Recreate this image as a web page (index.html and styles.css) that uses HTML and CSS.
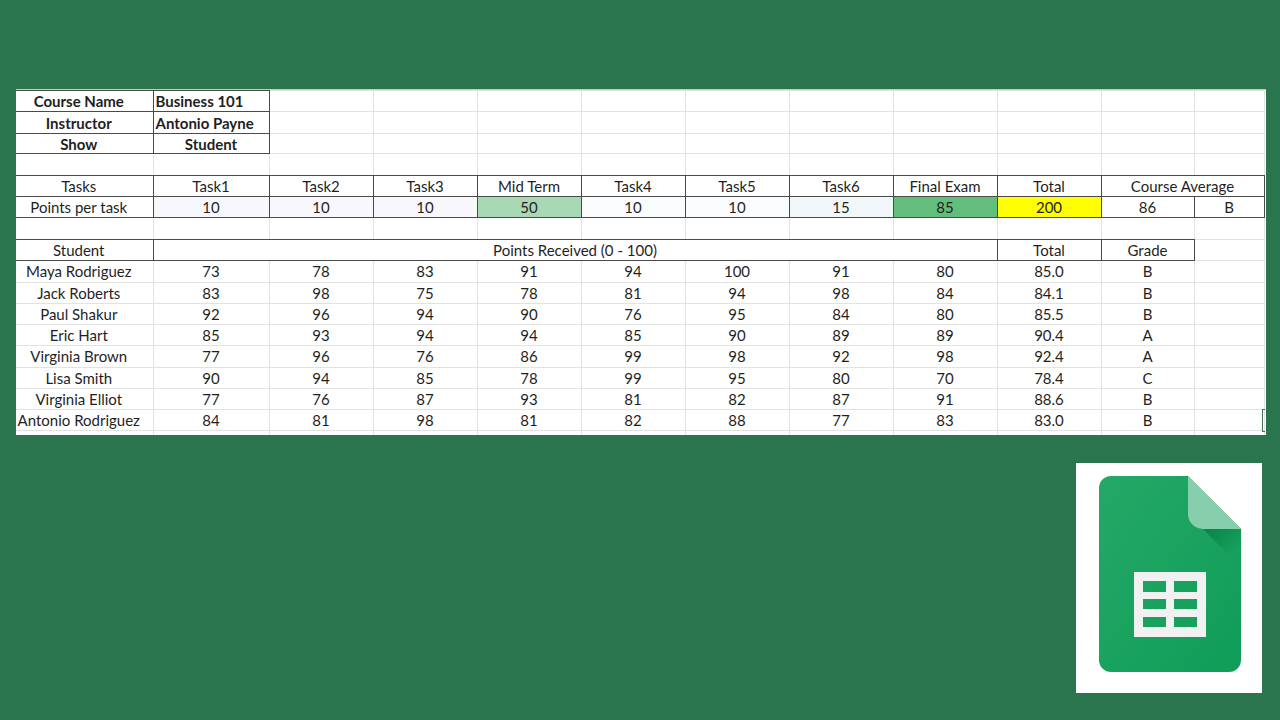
FILE: index.html
```html
<!DOCTYPE html>
<html lang="en">
<head>
<meta charset="utf-8">
<title>Gradebook</title>
<link rel="stylesheet" href="styles.css">
</head>
<body>
<main class="page">
<section class="sheet">
<table class="grid">
<colgroup><col class="c-name"><col class="c-first"><col class="c"><col class="c"><col class="c"><col class="c"><col class="c"><col class="c"><col class="c"><col class="c"><col class="c-grade"><col class="c-end"></colgroup>
<tbody>
<tr><th class="dark">Course Name</th><th class="dark left">Business 101</th><td></td><td></td><td></td><td></td><td></td><td></td><td></td><td></td><td></td><td></td></tr>
<tr class="tall"><th class="dark">Instructor</th><th class="dark left">Antonio Payne</th><td></td><td></td><td></td><td></td><td></td><td></td><td></td><td></td><td></td><td></td></tr>
<tr class="short"><th class="dark">Show</th><th class="dark">Student</th><td></td><td></td><td></td><td></td><td></td><td></td><td></td><td></td><td></td><td></td></tr>
<tr class="tall gap gap-full"><td></td><td></td><td></td><td></td><td></td><td></td><td></td><td></td><td></td><td></td><td></td><td></td></tr>
<tr><td class="dark">Tasks</td><td class="dark">Task1</td><td class="dark">Task2</td><td class="dark">Task3</td><td class="dark">Mid Term</td><td class="dark">Task4</td><td class="dark">Task5</td><td class="dark">Task6</td><td class="dark">Final Exam</td><td class="dark">Total</td><td class="dark" colspan="2">Course Average</td></tr>
<tr><td class="dark">Points per task</td><td class="dark p10">10</td><td class="dark p10">10</td><td class="dark p10">10</td><td class="dark p50">50</td><td class="dark p10b">10</td><td class="dark p10b">10</td><td class="dark p15">15</td><td class="dark p85">85</td><td class="dark p200">200</td><td class="dark">86</td><td class="dark">B</td></tr>
<tr class="tall gap"><td></td><td></td><td></td><td></td><td></td><td></td><td></td><td></td><td></td><td></td><td></td><td></td></tr>
<tr><td class="dark">Student</td><td class="dark" colspan="8">Points Received (0 - 100)</td><td class="dark">Total</td><td class="dark">Grade</td><td></td></tr>
<tr class="tall"><td>Maya Rodriguez</td><td>73</td><td>78</td><td>83</td><td>91</td><td>94</td><td>100</td><td>91</td><td>80</td><td>85.0</td><td>B</td><td></td></tr>
<tr><td>Jack Roberts</td><td>83</td><td>98</td><td>75</td><td>78</td><td>81</td><td>94</td><td>98</td><td>84</td><td>84.1</td><td>B</td><td></td></tr>
<tr><td>Paul Shakur</td><td>92</td><td>96</td><td>94</td><td>90</td><td>76</td><td>95</td><td>84</td><td>80</td><td>85.5</td><td>B</td><td></td></tr>
<tr><td>Eric Hart</td><td>85</td><td>93</td><td>94</td><td>94</td><td>85</td><td>90</td><td>89</td><td>89</td><td>90.4</td><td>A</td><td></td></tr>
<tr class="tall"><td>Virginia Brown</td><td>77</td><td>96</td><td>76</td><td>86</td><td>99</td><td>98</td><td>92</td><td>98</td><td>92.4</td><td>A</td><td></td></tr>
<tr><td>Lisa Smith</td><td>90</td><td>94</td><td>85</td><td>78</td><td>99</td><td>95</td><td>80</td><td>70</td><td>78.4</td><td>C</td><td></td></tr>
<tr><td>Virginia Elliot</td><td>77</td><td>76</td><td>87</td><td>93</td><td>81</td><td>82</td><td>87</td><td>91</td><td>88.6</td><td>B</td><td></td></tr>
<tr><td>Antonio Rodriguez</td><td>84</td><td>81</td><td>98</td><td>81</td><td>82</td><td>88</td><td>77</td><td>83</td><td>83.0</td><td>B</td><td class="selected"><span class="cursor"></span></td></tr>
<tr class="stub"><td></td><td></td><td></td><td></td><td></td><td></td><td></td><td></td><td></td><td></td><td></td><td></td></tr>
</tbody>
</table>
</section>
<aside class="logo-card">
<svg class="logo" viewBox="0 0 186 230" width="186" height="230" aria-label="Google Sheets logo">
<defs>
<linearGradient id="doc" x1="0" y1="0" x2="1" y2="1"><stop offset="0" stop-color="#25a867"/><stop offset="1" stop-color="#0f9d58"/></linearGradient>
<linearGradient id="shade" x1="0" y1="0" x2="0.7" y2="0.7"><stop offset="0" stop-color="#0c8049"/><stop offset="1" stop-color="#15a05d"/></linearGradient>
</defs>
<path d="M35 13H112L165 66V197a12 12 0 0 1-12 12H35a12 12 0 0 1-12-12V25a12 12 0 0 1 12-12Z" fill="url(#doc)"/>
<path d="M127 66L165 104V66Z" fill="url(#shade)"/>
<path d="M112 13L165 66H127a15 15 0 0 1-15-15Z" fill="#87ceac"/>
<path fill="#f1f1f1" fill-rule="evenodd" d="M58 109H130V174H58ZM67 118V129H90V118ZM98 118V129H121V118ZM67 136V146H90V136ZM98 136V146H121V136ZM67 154V164H90V154ZM98 154V164H121V154Z"/>
</svg>
</aside>
</main>
</body>
</html>
```
FILE: styles.css
```css
* { box-sizing: border-box; }
html, body { margin: 0; height: 100%; }
body { background: #2a754e; overflow: hidden; }
.page { display: flex; flex-direction: column; align-items: flex-start; padding: 89px 0 0 16px; width: 1280px; height: 720px; }
.sheet { width: 1250px; height: 346px; background: #fff; overflow: hidden; border-top: 1px solid #c9c9c9; }
.grid { border-collapse: collapse; table-layout: fixed; width: 1248px; font: 400 15px/1 Lato, "Liberation Sans", sans-serif; color: #1f1f1f; }
.c-name { width: 137px; }
.c-first { width: 116px; }
.c { width: 104px; }
.c-grade { width: 93px; }
.c-end { width: 70px; }
tr { height: 21px; }
tr.tall { height: 22px; }
tr.short { height: 20px; }
tr.stub { height: 5px; }
th, td { padding: 1px 0 0; border: 1px solid #e2e2e2; text-align: center; font-weight: 400; overflow: hidden; white-space: nowrap; position: relative; }
tr.tall td { padding-top: 0; }
th { font-weight: 700; }
th:first-child, td:first-child { border-left: 0; padding-right: 11px; }
.dark { border: 1.2px solid #4a4a4a; }
th.dark:first-child, td.dark:first-child { border-left: 0; }
.gap td:not(:last-child), .gap-full td:last-child { border-bottom: 1.2px solid #4a4a4a; }
.left { text-align: left; padding-left: 2px; }
.p10 { background: #f7f7fc; }
.p10b { background: #fbfcfd; }
.p15 { background: #f1f7f8; }
.p50 { background: #a9d8b4; }
.p85 { background: #63be7b; }
.p200 { background: #ffff00; }
.selected { overflow: visible; }
.cursor { position: absolute; top: -1px; right: -1px; width: 3px; height: 23px; border: 1px solid #4a6b57; border-right: 0; }
.logo-card { align-self: flex-end; margin: 28px 18px 0 0; width: 186px; height: 230px; background: #fff; }
.logo { display: block; }
```
